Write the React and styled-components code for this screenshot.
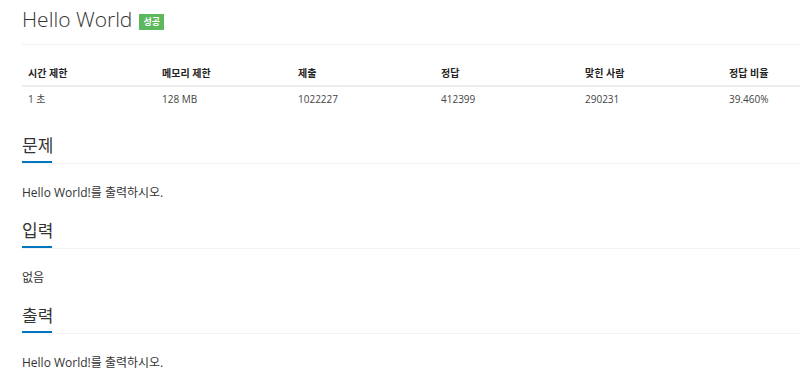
import styled, { createGlobalStyle } from "styled-components";

const GlobalStyle = createGlobalStyle`
    html, body {
        margin: 0;
        padding: 0;
        background: #fff;
    }
    body {
        font-family: "Open Sans", "Noto Sans CJK KR", sans-serif;
        color: #333;
    }
`

const Page = styled.div`
    padding: 0 0 0 22px;
    width: 800px;
    box-sizing: border-box;
`

const Header = styled.div`
    display: flex;
    align-items: flex-start;
    gap: 7px;
    padding: 6px 0 12px;
    border-bottom: 1px solid #f2f2f2;
`

const Title = styled.h1`
    margin: 0;
    font-size: 21px;
    line-height: 26px;
    font-weight: 300;
    color: #333;
`

const Badge = styled.span`
    margin-top: 8px;
    height: 16px;
    line-height: 16px;
    padding: 0 4px;
    background: ${({ color }) => color};
    color: #fff;
    font-size: 9px;
    font-weight: 700;
    font-family: "Noto Sans CJK KR", sans-serif;
`

const Table = styled.div`
    display: grid;
    grid-template-columns: 134px 136px 143px 144px 144px 1fr;
    margin: 16px 0 6px;
`

const Cell = styled.div`
    padding: 5px 6px;
    font-size: 10px;
    line-height: 14px;
    font-weight: ${({ head }) => (head ? 700 : 400)};
    color: ${({ head }) => (head ? "#222" : "#444")};
    border-bottom: ${({ head }) => (head ? "2px solid #ececec" : "none")};
    white-space: nowrap;
`

const Section = styled.section`
    padding-top: 17px;
`

const Headline = styled.h2`
    margin: 0;
    padding-bottom: 4px;
    font-size: 17px;
    line-height: 24px;
    font-weight: 400;
    color: #333;
    border-bottom: 1px solid #f3f3f3;
`

const Underline = styled.span`
    display: inline-block;
    width: 30px;
    white-space: nowrap;
    padding-bottom: 3px;
    margin-bottom: -4px;
    border-bottom: 2px solid #0076c0;
    vertical-align: top;
`

const Text = styled.p`
    margin: 20px 0 0;
    font-size: 12px;
    line-height: 18px;
    color: #333;
`

const heads = ["시간 제한", "메모리 제한", "제출", "정답", "맞힌 사람", "정답 비율"]
const values = ["1 초", "128 MB", "1022227", "412399", "290231", "39.460%"]

const sections = [
    { title: "문제", body: "Hello World!를 출력하시오." },
    { title: "입력", body: "없음" },
    { title: "출력", body: "Hello World!를 출력하시오." },
]

const App = () => {
    return (
        <Page>
            <GlobalStyle/>
            <Header>
                <Title>Hello World</Title>
                <Badge color="#5cb85c">성공</Badge>
            </Header>
            <Table>
                {heads.map((h) => (
                    <Cell head key={h}>{h}</Cell>
                ))}
                {values.map((v) => (
                    <Cell key={v}>{v}</Cell>
                ))}
            </Table>
            {sections.map((s) => (
                <Section key={s.title}>
                    <Headline>
                        <Underline>{s.title}</Underline>
                    </Headline>
                    <Text>{s.body}</Text>
                </Section>
            ))}
        </Page>
    )
}

export default App
